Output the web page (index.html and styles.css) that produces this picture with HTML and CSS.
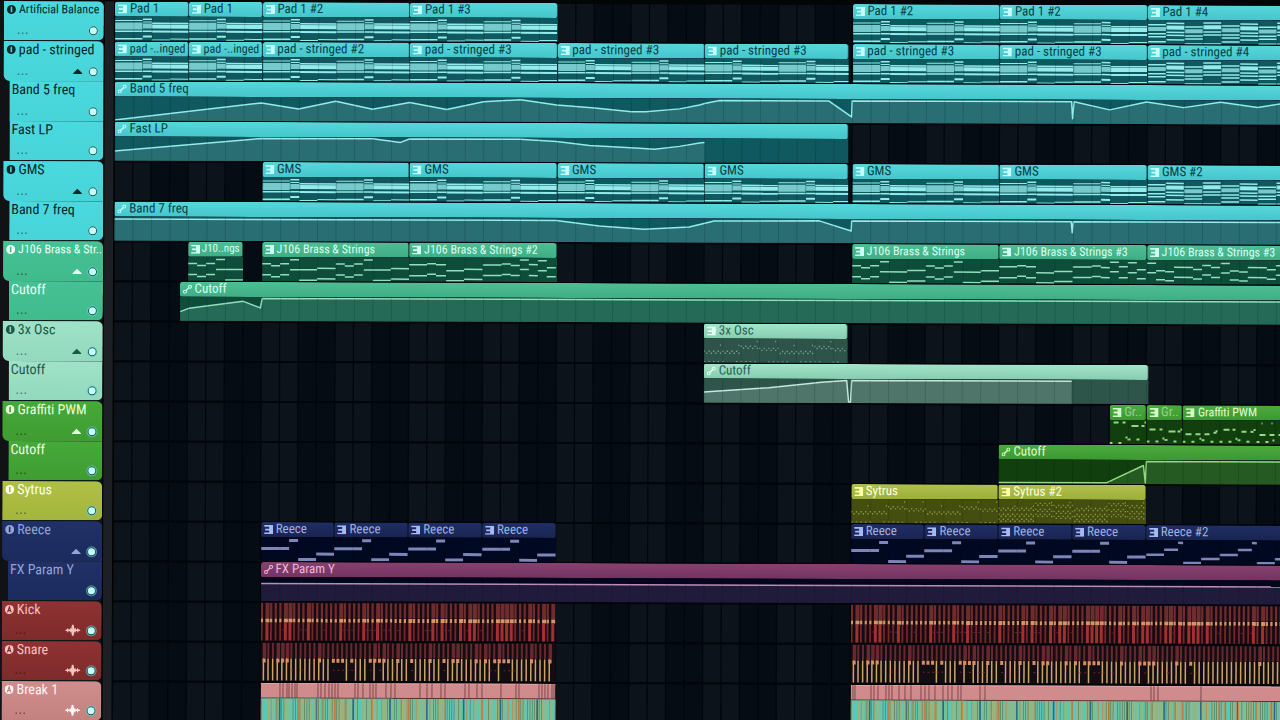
FILE: index.html
```html
<!DOCTYPE html>
<html lang="en">
<head>
<meta charset="utf-8">
<title>Playlist</title>
<link rel="stylesheet" href="styles.css">
</head>
<body>
<main class="playlist">
  <aside class="tracks" id="tracks" aria-label="Tracks"></aside>
  <div class="gutter"></div>
  <section class="timeline" id="timeline" aria-label="Arrangement"></section>
</main>
<script src="playlist.js"></script>
</body>
</html>
```

FILE: styles.css
```css
* { box-sizing: border-box; }

body {
  margin: 0;
  height: 100vh;
  overflow: hidden;
  background: #030507;
  font-family: "Roboto Condensed", "Liberation Sans Narrow", Roboto, sans-serif;
}

/* The whole playlist hangs at a very slight tilt. */
.playlist {
  display: flex;
  width: calc(100% + 8px);
  padding-top: 1px;
  transform: rotate(0.2deg);
  transform-origin: 0 0;
}

/* ---------- track headers ---------- */
.tracks {
  flex: 0 0 104px;
  min-width: 0;
  padding-left: 4px;
  background: #101215;
}

.group { color: var(--ink); }

.track {
  display: flex;
  flex-direction: column;
  justify-content: space-between;
  height: 40px;
  padding: 0 5px 2px 3px;
  background: linear-gradient(var(--top), var(--base));
}
.group .track:first-child { border-top-right-radius: 6px; border-bottom-left-radius: 6px; }
.group .track:last-child {
  border-bottom-right-radius: 6px;
  border-bottom: 1px solid #0a1a1c;
}
.group .track:only-child { border-bottom-left-radius: 0; }
.track.child { margin-left: 6px; padding-left: 2px; }

.name-line, .tool-line { display: flex; align-items: center; }
.name-line { height: 16px; gap: 3px; }
.tool-line { height: 16px; gap: 6px; }
.name {
  font-size: 14px;
  line-height: 16px;
  white-space: nowrap;
}
.name.long { font-size: 12px; }
.kind { flex: none; width: 9px; height: 9px; }

.track button {
  padding: 0;
  border: 0;
  background: none;
  color: inherit;
}
.track .more {
  height: 12px;
  margin-right: auto;
  margin-left: 10px;
  color: #000;
  opacity: 0.4;
}
.child .more { margin-left: 5px; }
.more svg, .fold svg, .led { display: block; }
.led {
  appearance: none;
  width: 9px;
  height: 9px;
  margin: 0 1px 0 0;
  border: 1px solid #0c5b63;
  border-radius: 50%;
  background: #c6fff6;
  outline: 1px solid rgba(120, 205, 200, 0.6);
}

.gutter { flex: 0 0 11px; background: #1c1f23; border-left: 1px solid #000; border-right: 1px solid #000; }

/* ---------- timeline ---------- */
.timeline { flex: 1; min-width: 0; overflow: hidden; background: #02060b; }
.lane { position: relative; height: 40px; }
.cells { display: block; width: 100%; height: 39px; }
.cells .light { fill: #0c131b; }
.cells .dark { fill: #050c14; }

/* Clips are placed in time over their lane. */
.clip {
  position: absolute;
  top: 0;
  height: 40px;
  overflow: hidden;
}
.clip-head {
  display: flex;
  align-items: center;
  gap: 3px;
  height: 15px;
  padding: 0 0 1px 3px;
  border-radius: 3px 3px 2px 2px;
  border-right: 1px solid rgba(0, 20, 25, 0.6);
  background: linear-gradient(var(--top), var(--base));
  color: var(--ink);
  font-size: 13px;
  line-height: 14px;
  white-space: nowrap;
  overflow: hidden;
}
.clip-head.short { font-size: 12px; }
.clip-head.tiny { gap: 2px; font-size: 11px; }
.clip-head svg { flex: none; width: 9px; height: 9px; color: var(--icon); }
.clip-head.dim span { opacity: 0.5; }
.clip-body { display: block; width: 100%; height: 24px; background: var(--body); }
.note { fill: var(--note); }
.band { fill: var(--note); opacity: 0.78; }
.area { fill: var(--area); }
.tick { fill: rgba(0, 10, 15, 0.14); }
.curve { fill: none; stroke: var(--note); stroke-width: 1.5; vector-effect: non-scaling-stroke; stroke-linejoin: round; }
.audio .clip-body { height: 39px; }

.cyan { --top: #58d7db; --base: #44c6cc; --ink: #063f47; --icon: #c3ffff; --body: rgba(16, 93, 99, 0.95); --note: #94ebeb; --area: #286e72; }
.jade { --top: #50be95; --base: #3eae85; --ink: #d7fff0; --icon: #d2fff4; --body: rgba(14, 79, 59, 0.97); --note: #91dfbe; --area: #246a57; }
.mint { --top: #a4e4ca; --base: #86cdb0; --ink: #295f50; --icon: #e8fff5; --body: rgba(48, 88, 76, 0.97); --note: #c5e8d9; --area: #4f756b; }
.green { --top: #4bab3f; --base: #3c9832; --ink: #e0ffd6; --icon: #d2ffc8; --body: rgba(17, 64, 14, 0.98); --note: #93d885; --area: #265a23; }
.olive { --top: #b0c04f; --base: #9caf38; --ink: #fbffe1; --icon: #fcffac; --body: rgba(70, 80, 17, 0.98); --note: #8c9b40; --area: #5b682a; }
.navy { --top: #202e65; --base: #192450; --ink: #9fb0e2; --icon: #a7b9f5; --body: rgba(1, 8, 34, 0.95); --note: #7d86b9; --area: #1e1c3c; }
.plum { --top: #88416f; --base: #733462; --ink: #edb6dc; --icon: #f0b0df; --body: rgba(3, 7, 30, 0.97); --note: #bf8cb7; --area: #201b3b; }

.group.cyan { --top: #4ad9de; --base: #46d4d9; --ink: #06262b; }
.group.jade { --top: #45c195; --base: #3fbb8c; --ink: #effff8; }
.group.mint { --top: #9fe2c8; --base: #92d9bd; --ink: #1d5948; }
.group.green { --top: #47a93a; --base: #3f9c32; --ink: #eaffdd; }
.group.olive { --top: #b0c046; --base: #a4b53d; --ink: #fdffe8; }
.group.navy { --top: #213065; --base: #1c2b5e; --ink: #93a4da; }
.group.red { --top: #8f3233; --base: #7e2a2b; --ink: #f7c1bd; }
.group.rose { --top: #cf8e8c; --base: #c38180; --ink: #fff4f2; }
```

FILE: playlist.js
```js
const WIDTH = 1173;      // timeline units across the view
const BAR = 73.75;       // units per bar

/* ---------- icons ---------- */
const ICONS = {
  generator: '<svg class="kind" viewBox="0 0 9 9"><circle cx="4.5" cy="4.5" r="4.5" fill="currentColor"/><path d="M3.7 1.8h1.6v5.4H3.7z" fill="var(--base)"/></svg>',
  audio: '<svg class="kind" viewBox="0 0 9 9"><circle cx="4.5" cy="4.5" r="4.5" fill="currentColor"/><path d="M2.7 7.4 4.5 1.8 6.3 7.4M3.2 5.6h2.6" fill="none" stroke="var(--base)" stroke-width="1.1"/></svg>',
  fold: '<svg width="10" height="6" viewBox="0 0 10 6"><path d="M5 .5 9.5 5v.7h-9V5z" fill="currentColor"/></svg>',
  more: '<svg width="12" height="12" viewBox="0 0 12 12"><path d="M1 8.500h1.500v1.500H1zM5 8.500h1.500v1.500H5zM9 8.500h1.500v1.500H9z" fill="currentColor"/></svg>',
  wave: '<svg width="16" height="12" viewBox="0 0 16 12"><path d="M0 6 1.500 5.200 2.200 5.200 3 3.500 3.800 5.200 4.800 5.200 5.500 3.500 6.300 4.800 7.200 .5H8.800L9.700 4.800 10.500 3.500 11.200 5.200 12.200 5.200 13 3.500 13.800 5.200 14.500 5.200 16 6 14.500 6.800 13.800 6.800 13 8.500 12.200 6.800 11.200 6.800 10.500 8.500 9.700 7.200 8.800 11.500H7.200L6.300 7.200 5.500 8.500 4.800 6.800 3.800 6.800 3 8.500 2.200 6.800 1.500 6.800z" fill="currentColor"/></svg>',
  notes: '<svg viewBox="0 0 9 9"><path d="M0 0h9v9H0V7.500h5V5.500H1V3.700h4V1.700H0z" fill="currentColor"/></svg>',
  automation: '<svg viewBox="0 0 9 9"><path d="M3 6 6 3" stroke="currentColor" stroke-width="1.300"/><circle cx="2" cy="7" r="1.500" fill="none" stroke="currentColor"/><circle cx="7" cy="2" r="1.500" fill="none" stroke="currentColor"/></svg>'
};

/* ---------- track headers ---------- */
const groups = [
  ['cyan', ['Artificial Balance']],
  ['cyan', ['pad - stringed', 'Band 5 freq', 'Fast LP']],
  ['cyan', ['GMS', 'Band 7 freq']],
  ['jade', ['J106 Brass & Str..', 'Cutoff']],
  ['mint', ['3x Osc', 'Cutoff']],
  ['green', ['Graffiti PWM', 'Cutoff']],
  ['olive', ['Sytrus']],
  ['navy', ['Reece', 'FX Param Y']],
  ['red', ['Kick'], true],
  ['red', ['Snare'], true],
  ['rose', ['Break 1'], true]
];

const escapeText = s => s.replace(/&/g, '&amp;');

document.getElementById('tracks').innerHTML = groups.map(([color, names, audio]) =>
  `<div class="group ${color}">` + names.map((name, i) => {
    const label = escapeText(name);
    const kind = i ? '' : ICONS[audio ? 'audio' : 'generator'];
    const fold = !i && names.length > 1 ? `<button class="fold" aria-label="Fold ${label}">${ICONS.fold}</button>` : '';
    const more = name === 'FX Param Y' || name === 'Reece' ? '<span class="more"></span>'
      : `<button class="more" aria-label="Options for ${label}">${ICONS.more}</button>`;
    return `<div class="track${i ? ' child' : ''}">
      <div class="name-line">${kind}<span class="name${name.length > 16 ? ' long' : ''}">${label}</span></div>
      <div class="tool-line">${more}${fold}${audio ? ICONS.wave : ''}<input class="led" type="checkbox" checked aria-label="Enable ${label}"></div>
    </div>`;
  }).join('') + '</div>').join('');

/* ---------- clip contents ---------- */
const rect = (x, y, w, h, cls = 'note') => `<rect class="${cls}" x="${x}" y="${y}" width="${w}" height="${h}"/>`;
const paint = (x, y, w, h, fill) => `<rect x="${x}" y="${y}" width="${w}" height="${h}" fill="${fill}"/>`;
const each = (n, fn) => Array.from({ length: n }, (_, i) => fn(i)).join('');

function chords(bars) {
  return each(Math.ceil(bars), b => {
    const x = b * BAR;
    return rect(x, 18.5, 27.5, 1) + rect(x, 21, 27.5, 7, 'band') + rect(x, 29, 27.5, 1.5) + rect(x, 36.5, 27.5, 1.5) +
      rect(x + 28, 17, 9, 1.5) + rect(x + 28, 20, 9, 1) + rect(x + 28, 22, 9, 5, 'band') + rect(x + 28, 29, 9, 1.5) + rect(x + 28, 34, 9, 2) +
      rect(x + 37, 21, 36.5, 1.5) + rect(x + 37, 23, 36.5, 4) + rect(x + 37, 29, 36.5, 2) + rect(x + 37, 38, 18, 1) + rect(x + 55, 37, 18.5, 1);
  });
}

function denseChords() {
  const top = [19, 17.5, 21, 17, 20, 18, 21, 17];
  return each(8, i => {
    const x = i * BAR / 4, t = top[i];
    return rect(x, t, 18, 1.5) + rect(x, t + 3, 18, 4, i % 2 ? 'note' : 'band') + rect(x, t + 9, 18, 1.5) + rect(x, t + 12, 18, 1.5) +
      rect(x, i % 4 < 2 ? 36 - (i % 4) * 2 : 38, 18, 1.5);
  });
}

const list = notes => notes.map(([x, y, w, h = 1.5]) => rect(x, y, w, h)).join('');

const brassBar = [[0, 21, 9], [9, 23, 9], [18, 21, 9], [28, 17, 9], [28, 27, 27], [55, 25.5, 18.5],
  [0, 32, 9], [9, 34, 9], [18, 32, 9], [37, 37.5, 18], [55, 36, 18.5]];
const brassTail = [[0, 21.5, 18], [18, 20.5, 9], [27, 21.5, 10], [37, 27.5, 18], [55, 26, 18.5],
  [0, 32.5, 18], [18, 31, 9], [27, 32.5, 10], [37, 37.5, 18], [55, 36, 18.5]];
const brassEnd = [[0, 21.5, 19], [19, 20.5, 9], [28, 22, 9], [37, 16.5, 9], [46, 21, 9], [55, 17, 9], [64, 24, 9],
  [0, 32, 19], [19, 31, 9], [28, 32, 9], [37, 26, 9], [46, 32, 9], [55, 27, 9], [64, 33, 9]];
const brassThree = [[0, 17.5, 9], [9, 25, 9], [18, 26, 9], [27, 21.5, 19], [46, 23.5, 9], [55, 19.5, 9], [64, 21.5, 9],
  [0, 27, 9], [9, 34, 9], [18, 35, 9], [27, 31.5, 19], [46, 33, 9], [55, 29, 9], [64, 31.5, 9]];
const at = (notes, bar) => notes.map(([x, y, w]) => [x + bar * BAR, y, w]);

const reece = [[0, 25, 28, 3], [28, 17, 9, 3], [37, 36, 18, 3], [55, 30.5, 18.5, 3]];
const reeceTwo = [0, 1].flatMap(b => [[0, 28.5, 18], [18, 23.5, 14], [32, 16.5, 5], [37, 36.5, 18], [55, 32.5, 18.5]]
  .map(([x, y, w]) => [x + b * BAR, y, w, 2.5]));

const graffitiOne = [[4, 16.5, 5], [13, 16.5, 3], [22, 20, 7], [32, 20, 3], [35, 16.5, 1.5], [0, 37, 3], [9, 37, 3], [16, 31.5, 2], [18, 33.5, 3], [27, 33.5, 3]];
const graffitiTwo = [[3, 23.5, 6], [13, 23.5, 3], [22, 25.5, 7], [31, 25.5, 3], [34, 23.5, 2], [0, 35.5, 3], [9, 35.5, 3], [16, 32.5, 2], [18, 34, 3], [27, 35.5, 3]];
const graffitiThree = [[3, 28, 6], [13, 28, 5], [22, 28, 5], [31, 26.5, 3], [33, 25, 2], [41, 23.5, 6], [50, 23.5, 3], [59, 25.5, 5], [68, 25.5, 3], [71, 23.5, 2],
  [77, 28.5, 6], [87, 28.5, 5], [96, 28.5, 2], [0, 35.5, 3], [9, 35.5, 3], [17, 32.5, 2], [19, 34, 3], [28, 35.5, 3], [37, 35.5, 3], [46, 35.5, 3], [53, 32.5, 2],
  [55, 34, 3], [64, 35.5, 3], [74, 35.5, 3], [83, 35.5, 3], [90, 34, 2], [79, 17, 1], [89, 17, 1]];
const bold = notes => notes.map(([x, y, w]) => [x, y, w, 2]);

/* Fast arpeggio, drawn as rows of tiny dots. */
function arpeggio(width, offsets) {
  return each(Math.floor(width / 2.3), i => {
    const phase = (i * 2.3) % BAR;
    const lift = phase > 55 ? 3 : phase > 35 ? 5 : 0;
    return offsets.map(y => rect(i * 2.3, y - lift + (i % 2) * 2, 1.3, 1.4)).join('') +
      (i % 8 === 7 ? rect(i * 2.3, phase > 35 ? 17 : 21, 1, 1.5) : '');
  });
}

function curve(points) {
  const line = points.map(p => p.join(' ')).join('L');
  return `<path class="area" d="M${line}V40H${points[0][0]}z"/><path class="curve" d="M${line}"/>`;
}

/* Repeatable pseudo-random sequence for the drum hits. */
function sequence(seed) {
  const next = () => (seed = (seed * 16807) % 2147483647) / 2147483647;
  next(); next();
  return next;
}

function kick(width) {
  const next = sequence(71);
  let out = paint(0, 0, width, 39, '#170b12');
  for (let x = 0; x < width - 3; x += 4.61) {
    const w = next() > 0.68 ? 4 : 2.2;
    out += paint(x, 1, w, 15, '#6f2c2f') + paint(x, 16.5, w, 4, '#d99465') + paint(x, 20.5, w > 3 ? 3 : 1.8, 18, w > 3 ? '#a13030' : '#75262a');
    if (next() > 0.7) out += paint(x + 2.5, 27.5, 3, 1, '#57232b');
  }
  return out;
}

function snare(width) {
  const next = sequence(913);
  let out = paint(0, 0, width, 39, '#130c11');
  for (let x = 2; x < width - 3; x += 4.61) {
    const roll = next(), w = roll > 0.8 ? 3.5 : 2;
    out += paint(x, 1, w, 15, '#67292f');
    if (roll > 0.1) out += paint(x, 16.5, 1.5, 22, '#cba568');
    if (roll > 0.8 || roll < 0.1) out += paint(x, 16.5, 3, 4, '#d98f61');
    if (roll < 0.2) out += paint(x + 1, 27.5, 2, 1, '#71262e');
  }
  return out;
}

function breakbeat(width, cuts) {
  const next = sequence(4231);
  const tints = ['#62c7b0', '#82bd96', '#93b583', '#56c9bb', '#a1b27b', '#75c09f'];
  let out = paint(0, 1, width, 15, '#d08c8d') + paint(0, 1, width, 1, '#e0a3a2');
  cuts.forEach(x => { out += paint(x, 1, 0.8, 15, '#6d373d'); });
  out += paint(0, 15.5, width, 1, '#5a3034') + paint(0, 16.5, width, 24, '#75bb9a');
  for (let x = 0, i = 0; x < width; x += 2.3, i++) {
    const roll = next();
    out += paint(x, 16.5, 2.4, 24, tints[Math.floor(roll * 6)]);
    if (roll > 0.55) out += paint(x, 16.5, 0.7, 24, '#587f62');
    if (i % 8 === 0) out += paint(x, 16.5, 1.5, 24, i % 16 ? '#2a6685' : '#bd7742');
    if (roll < 0.12) out += paint(x + 1, 16.5, 1.2, 24, '#c18b51');
  }
  return out;
}

/* ---------- arrangement: one entry per lane; [start bar, end bar, title, contents, kind] ---------- */
const pts = (points, start) => points.map(([x, y]) => [x - 115 - start * BAR, y]);

const chordLane = (title, spans) => spans.map(([a, b, suffix = '']) =>
  [a, b, title + suffix, suffix === ' #4' || title === 'GMS' && suffix ? denseChords() : chords(b - a)]);

const band5 = [[115, 38.5], [262, 21], [299, 27], [336, 19], [373, 27], [410, 20], [447, 27], [484, 19], [521, 17], [557, 22], [595, 25], [632, 28.5], [646, 28.5],
  [680, 25.5], [700, 21.5], [705, 20], [720, 17], [829, 17], [852, 33], [852.5, 17], [1072, 17], [1073, 34], [1074.5, 17], [1110, 25], [1147, 17], [1184, 22.5], [1221, 17], [1258, 22], [1290, 17]];
const fastLp = [[115, 29.5], [262, 16.5], [373, 16.5], [401, 20], [410, 16.5], [520, 16.5], [557, 18.5], [590, 22.5], [640, 25], [655, 26], [680, 23], [700, 19.5], [705, 19]];
const band7 = [[115, 17.5], [557, 17.5], [600, 23], [645, 26], [690, 23.5], [715, 17.5], [820, 17], [852, 27], [852.5, 17], [1072, 17], [1073, 28], [1074, 17], [1290, 17]];
const jadeCut = [[181, 30], [190, 26.5], [205, 24.5], [244, 19.5], [261, 26], [263, 16.5], [1290, 16.5]];
const mintCut = [[705, 28.5], [770, 24], [823, 18.5], [848, 16.5], [850, 38], [852, 38], [853, 16.5], [1073, 16.5]];
const greenCut = [[1000, 38], [1108, 38], [1145, 20.5], [1147, 38], [1148, 16.5], [1290, 16.5]];

const cutsA = [19, 22, 26, 28, 31, 34, 36, 57, 60, 64, 68, 71, 74, 77, 94, 97, 102, 109, 112, 115, 125, 130, 134, 159, 166, 171, 180, 184, 204, 208, 216, 221, 240, 255, 258, 278, 281, 284, 287, 291, 293];
const cutsB = [2, 4, 20, 23, 27, 35, 38, 41, 48, 54, 60, 70, 74, 78, 84, 92, 97, 101, 107, 110, 129, 134, 300, 303, 307, 350];

const lanes = [
  ['cyan', chordLane('Pad 1', [[0, 1], [1, 2], [2, 4, ' #2'], [4, 6, ' #3'], [10, 12, ' #2'], [12, 14, ' #2'], [14, 16, ' #4']])],
  ['cyan', [[0, 1, 'pad -..inged', chords(1), 'short'], [1, 2, 'pad -..inged', chords(1), 'short'],
    ...chordLane('pad - stringed', [[2, 4, ' #2'], [4, 6, ' #3'], [6, 8, ' #3'], [8, 9.95, ' #3'], [10, 12, ' #3'], [12, 14, ' #3'], [14, 16, ' #4']])]],
  ['cyan', [[0, 16, 'Band 5 freq', curve(pts(band5, 0)), 'automation']]],
  ['cyan', [[0, 9.95, 'Fast LP', curve(pts(fastLp, 0)), 'automation']]],
  ['cyan', chordLane('GMS', [[2, 4], [4, 6], [6, 8], [8, 9.95], [10, 12], [12, 14], [14, 16, ' #2']])],
  ['cyan', [[0, 16, 'Band 7 freq', curve(pts(band7, 0)), 'automation']]],
  ['jade', [
    [1, 1.75, 'J10..ngs', list(brassBar), 'tiny'],
    [2, 4, 'J106 Brass & Strings', list([...brassBar, ...at(brassBar, 1)]), 'short'],
    [4, 6, 'J106 Brass & Strings #2', list([...brassTail, ...at(brassEnd, 1)]), 'short'],
    [10, 12, 'J106 Brass & Strings', list([...brassBar, ...at(brassBar, 1)]), 'short'],
    [12, 14, 'J106 Brass & Strings #3', list([...brassTail, ...at(brassEnd, 1)]), 'short'],
    [14, 16, 'J106 Brass & Strings #3', list([...brassThree, ...at(brassThree, 1)]), 'short']]],
  ['jade', [[0.89, 16, 'Cutoff', curve(pts(jadeCut, 0.89)), 'automation']]],
  ['mint', [[8, 9.95, '3x Osc', `<g opacity=".5">${arpeggio(1.95 * BAR, [27])}${each(30, i => i % 7 < 5 ? rect(i * 4.6, 37.5, 1.5, 1) : '')}</g>`]]],
  ['mint', [[8, 14.03, 'Cutoff', curve(pts(mintCut, 8)), 'automation']]],
  ['green', [[13.5, 14, 'Gr..', list(bold(graffitiOne)), 'dim'], [14, 14.5, 'Gr..', list(bold(graffitiTwo)), 'dim'], [14.5, 16, 'Graffiti PWM', list(bold(graffitiThree)), 'short']]],
  ['green', [[12, 16, 'Cutoff', curve(pts(greenCut, 12)), 'automation']]],
  ['olive', [
    [10, 12, 'Sytrus', arpeggio(2 * BAR, [27]) + each(32, i => i % 7 < 5 ? rect(i * 4.6, 37.5, 1.5, 1) : '')],
    [12, 14, 'Sytrus #2', arpeggio(2 * BAR, [23, 29, 34])]]],
  ['navy', [...[2, 3, 4, 5, 10, 11, 12, 13].map(b => [b, b + 1, 'Reece', list(reece)]), [14, 16, 'Reece #2', list(reeceTwo)]]],
  ['plum', [[2, 16, 'FX Param Y', curve([[0, 21.5], [1100, 21.5]]), 'automation']]],
  ['red', [[2, 6, '', kick(4 * BAR), 'audio'], [10, 16, '', kick(6 * BAR), 'audio']]],
  ['red', [[2, 6, '', snare(4 * BAR), 'audio'], [10, 16, '', snare(6 * BAR), 'audio']]],
  ['rose', [[2, 6, '', breakbeat(4 * BAR, cutsA), 'audio'], [10, 16, '', breakbeat(6 * BAR, cutsB), 'audio']]]
];

const cells = `<svg class="cells" viewBox="0 0 ${WIDTH} 39" preserveAspectRatio="none" aria-hidden="true">` +
  each(64, i => rect(i * BAR / 4 + 0.5, 1, BAR / 4 - 1.2, 38, i % 4 < 2 ? 'light' : 'dark')) + '</svg>';

function clip([start, end, title, contents, kind = 'notes']) {
  const width = (end - start) * BAR;
  const place = `left:${start * BAR / WIDTH * 100}%;width:${width / WIDTH * 100}%`;
  const audio = kind === 'audio';
  const firstTick = Math.ceil(start * 4);
  const ticks = audio ? '' : each(Math.ceil(end * 4) - firstTick, i => rect(((firstTick + i) / 4 - start) * BAR, 16, 1, 24, 'tick'));
  const head = audio ? '' : `<div class="clip-head ${kind}">${ICONS[kind === 'automation' ? kind : 'notes']}<span>${escapeText(title)}</span></div>`;
  return `<div class="clip${audio ? ' audio' : ''}" style="${place}">${head}
    <svg class="clip-body" viewBox="0 ${audio ? 0 : 15} ${width} ${audio ? 39 : 24}" preserveAspectRatio="none">${contents}${ticks}</svg></div>`;
}

document.getElementById('timeline').innerHTML = lanes.map(([color, clips]) =>
  `<div class="lane ${color}">${cells}${clips.map(clip).join('')}</div>`).join('');
```
